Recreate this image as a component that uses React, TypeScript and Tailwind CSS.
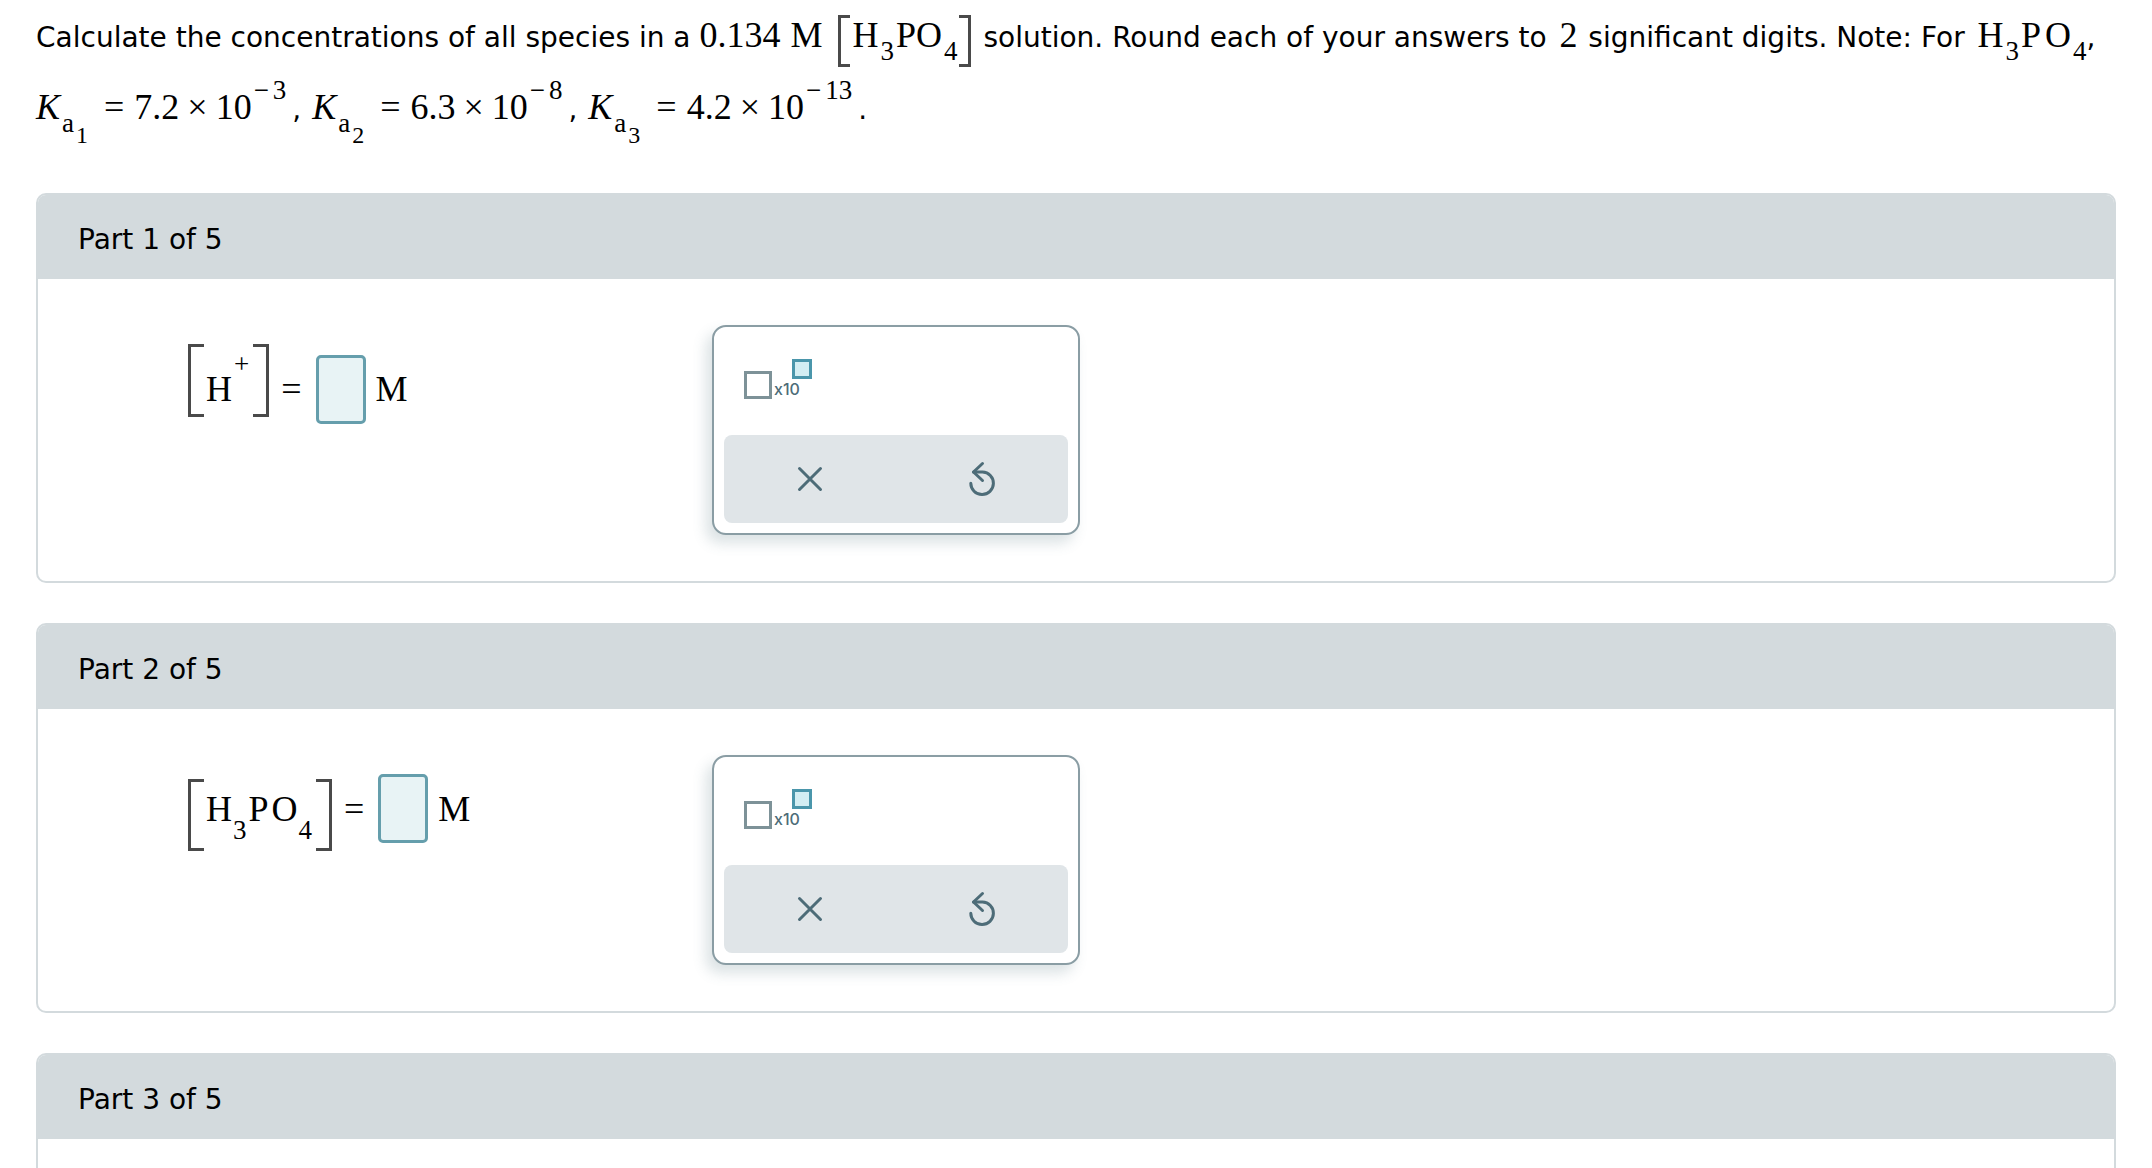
import React, { useState } from "react";

const serif = "font-['Liberation_Serif',serif] text-[36px] leading-none";

const Sub = ({ children }: { children: React.ReactNode }) => (
  <sub className="static ml-0.5 text-[27px] align-[-13px]">{children}</sub>
);

const LowSub = ({ children }: { children: React.ReactNode }) => (
  <sub className="static ml-px text-[27px] align-[-18px]">{children}</sub>
);

const Sup = ({ children }: { children: React.ReactNode }) => (
  <sup className="static ml-0.5 text-[27px] align-[20px]">{children}</sup>
);

// tall square brackets that follow the height of what they hold
const Brackets = ({ children }: { children: React.ReactNode }) => (
  <span className="inline-flex items-stretch">
    <span className="w-4 border-3 border-r-0 border-[#4a4a4a]" />
    {children}
    <span className="w-4 border-3 border-l-0 border-[#4a4a4a]" />
  </span>
);

const SmallBrackets = ({ children }: { children: React.ReactNode }) => (
  <span className="mr-3 ml-4 inline-flex items-stretch">
    <span className="w-3 border-3 border-r-0 border-[#4a4a4a]" />
    <span className="self-baseline pt-0.5 pr-0.5 pb-3.5 pl-0.5 whitespace-nowrap">{children}</span>
    <span className="w-3 border-3 border-l-0 border-[#4a4a4a]" />
  </span>
);

const constants = [
  { index: "1", value: "7.2", exponent: "3", end: "," },
  { index: "2", value: "6.3", exponent: "8", end: "," },
  { index: "3", value: "4.2", exponent: "13", end: "." },
];

const Question = () => (
  <p className="pt-0.5 text-[28px] leading-[72px]">
    Calculate the concentrations of all species in a{" "}
    <span className={serif}>
      <span>0.134</span>
      <span className="ml-2.5">M</span>
      <SmallBrackets>
        H<Sub>3</Sub>
        <span className="ml-0.5">PO</span>
        <Sub>4</Sub>
      </SmallBrackets>
    </span>
    solution. Round each of your answers to <span className={`${serif} mr-0.5 ml-1`}>2</span> significant digits. Note: For{" "}
    <span className={`${serif} ml-1 whitespace-nowrap`}>
      H<Sub>3</Sub>
      <span className="ml-0.5">P</span>
      <span className="ml-1">O</span>
      <Sub>4</Sub>
    </span>
    ,{" "}
    {constants.map((k) => (
      <React.Fragment key={k.index}>
        <span className="mr-0.5 whitespace-nowrap">
          <span className={serif}>
            <i>K</i>
            <Sub>a</Sub>
            <sub className="static ml-0.5 text-[24px] align-[-24px]">{k.index}</sub>
            <span className="ml-4">=</span>
            <span className="ml-2.5">{k.value}</span>
            <span className="ml-2">×</span>
            <span className="ml-2">10</span>
            <Sup>
              −<span className="ml-1">{k.exponent}</span>
            </Sup>
          </span>
          <span className="ml-1.5">{k.end}</span>
        </span>{" "}
      </React.Fragment>
    ))}
  </p>
);

const UndoIcon = () => (
  <svg width="28" height="36" viewBox="0 0 28 36" fill="none" stroke="#4d6c78" strokeWidth="3" strokeLinecap="round" strokeLinejoin="round">
    <path d="M14.5 2.5 L5.5 11 L14.5 19.5" />
    <path d="M5.5 11 H14.5 A11.3 11.3 0 1 1 2.8 22.3" />
  </svg>
);

const CloseIcon = () => (
  <svg width="26" height="26" viewBox="0 0 26 26" fill="none" stroke="#4d6c78" strokeWidth="3" strokeLinecap="round">
    <path d="M2.5 2.5 L23.5 23.5 M23.5 2.5 L2.5 23.5" />
  </svg>
);

const ToolBox = ({ onClear, onReset }: { onClear: () => void; onReset: () => void }) => (
  <div className="flex w-[368px] flex-col rounded-[14px] border-2 border-[#8a9da4] bg-white p-2.5 shadow-[-6px_8px_14px_rgba(77,108,120,0.2)]">
    <div className="flex h-[98px] items-start pt-[22px] pl-5">
      <button type="button" aria-label="Scientific notation" className="flex h-10 cursor-pointer items-end">
        <span className="size-7 border-3 border-[#7d9298]" />
        <span className="ml-0.5 flex flex-col items-end">
          <span className="-mr-3 size-5 border-3 border-[#4a96ab] bg-[#d3eef3]" />
          <span className="font-[Inter,sans-serif] text-base leading-5 font-medium text-[#4d6c78]">x10</span>
        </span>
      </button>
    </div>
    <div className="grid h-[88px] grid-cols-2 rounded-lg bg-[#e0e5e8]">
      <button type="button" aria-label="Clear" onClick={onClear} className="flex cursor-pointer items-center justify-center">
        <CloseIcon />
      </button>
      <button type="button" aria-label="Reset" onClick={onReset} className="flex cursor-pointer items-center justify-center">
        <UndoIcon />
      </button>
    </div>
  </div>
);

const PartHeader = ({ number }: { number: number }) => (
  <h2 className="flex h-[84px] items-center bg-[#d3dadd] pt-1.5 pl-10 text-[28px]">Part {number} of 5</h2>
);

const Part = ({ number, label, children }: { number: number; label: string; children: React.ReactNode }) => {
  const [answer, setAnswer] = useState("");

  return (
    <section className="overflow-hidden rounded-[10px] border-2 border-[#d3dadd]">
      <PartHeader number={number} />
      <div className="flex items-start py-[46px] pl-[150px]">
        <div className={`flex w-[524px] items-baseline pt-[19px] ${serif}`}>
          <Brackets>{children}</Brackets>
          <span className="ml-3">=</span>
          <input
            type="text"
            aria-label={label}
            value={answer}
            onChange={(e) => setAnswer(e.target.value)}
            className="ml-3.5 h-[69px] w-[50px] rounded-[5px] border-3 border-[#659eac] bg-[#e8f3f5] text-center"
          />
          <span className="ml-2.5">M</span>
        </div>
        <ToolBox onClear={() => setAnswer("")} onReset={() => setAnswer("")} />
      </div>
    </section>
  );
};

export default function App() {
  return (
    <main className="flex min-h-screen flex-col bg-white px-9 font-['DejaVu_Sans',Verdana,sans-serif] text-black">
      <Question />
      <div className="mt-[47px] flex grow flex-col gap-10">
        <Part number={1} label="Concentration of H+">
          <span className="self-baseline pt-5 pr-1 pb-[10px] pl-0.5 whitespace-nowrap">
            H<sup className="static ml-0.5 text-[27px] align-[28px]">+</sup>
          </span>
        </Part>
        <Part number={2} label="Concentration of H3PO4">
          <span className="self-baseline pt-3 pr-1 pb-[21px] pl-0.5 whitespace-nowrap">
            H<LowSub>3</LowSub>
            <span className="ml-0.5">P</span>
            <span className="ml-[3px]">O</span>
            <LowSub>4</LowSub>
          </span>
        </Part>
        {/* not opened yet, takes the rest of the page */}
        <section className="grow overflow-hidden rounded-t-[10px] border-2 border-b-0 border-[#d3dadd]">
          <PartHeader number={3} />
        </section>
      </div>
    </main>
  );
}
